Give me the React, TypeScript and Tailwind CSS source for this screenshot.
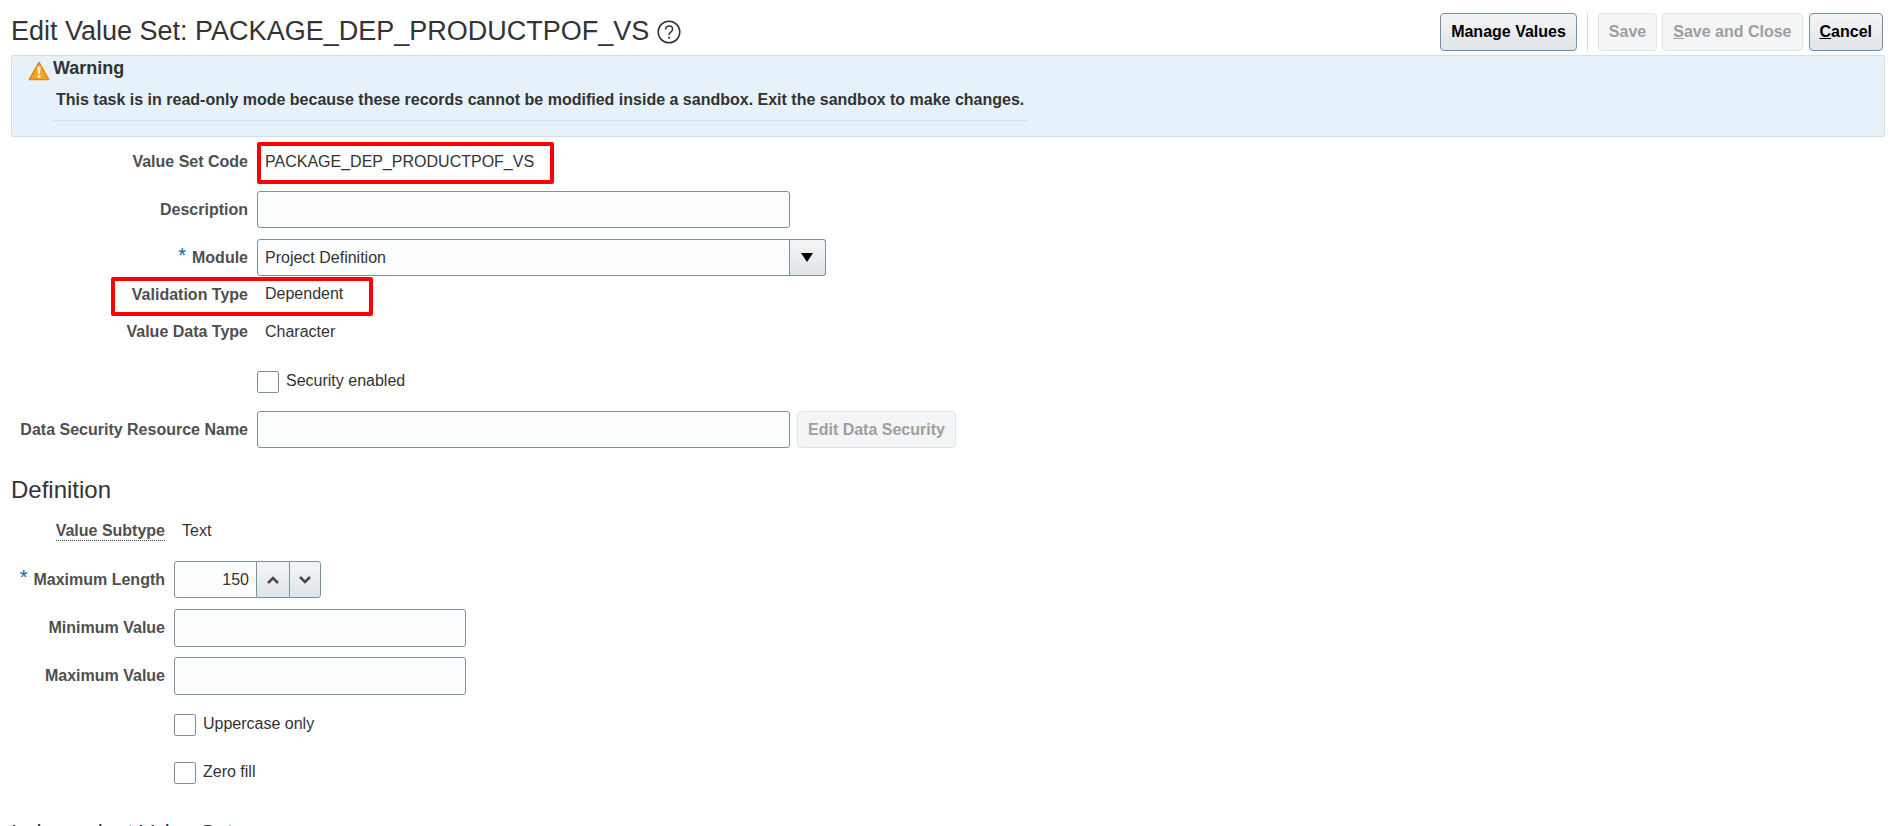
import { useState } from 'react'
import type { ReactNode } from 'react'
import clsx from 'clsx'

const inputClass = 'h-full rounded-[3px] border border-[#7c919e] bg-[#fcfdff] px-[7px] text-[#333333] focus:outline-none focus:border-[#0572ce]'

const Button = ({ children, disabled = false }: { children: ReactNode; disabled?: boolean }) => (
    <button
        type="button"
        disabled={disabled}
        className={clsx(
            'h-full whitespace-nowrap rounded-[4px] border px-[10px] font-bold',
            disabled
                ? 'border-[#dfe4e9] bg-[#f4f5f7] text-[#9e9e9e]'
                : 'border-[#7590a5] bg-linear-to-b from-[#f3f4f5] to-[#e1e5e8] text-black'
        )}
    >
        {children}
    </button>
)

const Highlight = ({ className }: { className: string }) => (
    <span className={clsx('pointer-events-none absolute rounded-[2px] border-4 border-[#ff0000]', className)} />
)

const Required = () => <span className="mr-[6px] self-start pt-1 text-[20px] leading-[24px] font-normal text-[#0f5fb0]">*</span>

interface RowProps {
    label?: string
    htmlFor?: string
    required?: boolean
    hint?: boolean
    narrow?: boolean
    className?: string
    children: ReactNode
}

const Row = ({ label, htmlFor, required, hint, narrow, className, children }: RowProps) => (
    <div className={clsx('relative flex items-center', className)}>
        <div className={clsx('mr-[9px] flex h-full shrink-0 items-center justify-end font-bold text-[#4f4f4f]', narrow ? 'w-[154px]' : 'w-[237px]')}>
            {required && <Required />}
            {label && (
                <label htmlFor={htmlFor} className={clsx(hint && 'border-b border-dotted border-[#4f4f4f] leading-[18px]')}>
                    {label}
                </label>
            )}
        </div>
        {children}
    </div>
)

const Checkbox = ({ id, label }: { id: string; label: string }) => (
    <div className="flex items-center">
        <input
            id={id}
            type="checkbox"
            className="h-[22px] w-[22px] appearance-none rounded-[2px] border border-[#7c919e] bg-white checked:bg-[#0572ce]"
        />
        <label htmlFor={id} className="ml-[7px] pb-0.5">{label}</label>
    </div>
)

const HelpIcon = () => (
    <svg width="24" height="24" viewBox="0 0 24 24" fill="none" stroke="#333333" strokeWidth="1.5">
        <circle cx="12" cy="12" r="10.8" />
        <path d="M8.6 9.6C8.6 7.4 10 6 12.1 6s3.5 1.3 3.5 3.1c0 1.5-.8 2.3-1.9 3.1-1.1.8-1.6 1.4-1.6 2.8" />
        <path d="M12.1 16.8v1.9" strokeWidth="1.8" />
    </svg>
)

const WarningIcon = () => (
    <svg width="22" height="20" viewBox="0 0 22 20">
        <path d="M11 1.3 20.8 18.6H1.2Z" fill="#faa21f" stroke="#dd8a15" strokeWidth="1.4" strokeLinejoin="round" />
        <path d="M9.5 5.6h3l-.5 7.2h-2Z" fill="#ffffff" />
        <circle cx="11" cy="15.4" r="1.6" fill="#ffffff" />
    </svg>
)

const App = () => {
    const [maxLength, setMaxLength] = useState(150)

    return (
        <div className="h-screen overflow-hidden bg-white pr-[6px] pl-[11px] font-['Liberation_Sans',Arial,sans-serif] text-[16px] leading-[20px] text-[#333333]">
            <header className="flex h-[55px] items-start justify-between">
                <div className="flex items-center pt-[14px]">
                    <h1 className="text-[27px] leading-[34px] whitespace-nowrap">Edit Value Set: PACKAGE_DEP_PRODUCTPOF_VS</h1>
                    <button type="button" aria-label="Help" className="ml-[8px] pt-0.5">
                        <HelpIcon />
                    </button>
                </div>
                <div className="mt-[13px] flex h-[38px] pr-[2px]">
                    <Button>Manage Values</Button>
                    <span className="mx-[10px] w-px bg-[#d0dbe3]" />
                    <Button disabled>Save</Button>
                    <span className="w-[5px]" />
                    <Button disabled><u>S</u>ave and Close</Button>
                    <span className="w-[6px]" />
                    <Button><u>C</u>ancel</Button>
                </div>
            </header>

            <section className="flex h-[82px] items-start rounded-[2px] border border-[#d3dee6] bg-[#e7f1fa] pl-4">
                <div className="pt-[5px]">
                    <WarningIcon />
                </div>
                <div className="ml-[3px]">
                    <h2 className="pt-[2px] text-[18px] leading-[20px] font-bold">Warning</h2>
                    <p className="mt-[12px] border-b border-[#d3dee6] pr-1 pb-[10px] pl-[3px] font-bold">
                        This task is in read-only mode because these records cannot be modified inside a sandbox. Exit the sandbox to make changes.
                    </p>
                </div>
            </section>

            <form onSubmit={(e) => e.preventDefault()}>
                <Row label="Value Set Code" className="mt-[6px] h-[37px]">
                    <span className="pl-2">PACKAGE_DEP_PRODUCTPOF_VS</span>
                    <Highlight className="-top-px left-[246px] h-[42px] w-[297px]" />
                </Row>
                <Row label="Description" htmlFor="description" className="mt-[11px] h-[37px]">
                    <input id="description" type="text" className={clsx(inputClass, 'w-[533px]')} />
                </Row>
                <Row label="Module" htmlFor="module" required className="mt-[11px] h-[37px]">
                    <div className="relative h-full">
                        <select id="module" className={clsx(inputClass, 'w-[569px] appearance-none')}>
                            <option>Project Definition</option>
                        </select>
                        <span className="pointer-events-none absolute top-0 right-0 flex h-full w-[37px] items-center justify-center rounded-r-[3px] border border-[#7c919e] bg-linear-to-b from-[#f3f4f5] to-[#e1e5e8] pr-0.5">
                            <svg width="12" height="9" viewBox="0 0 12 9">
                                <path d="M0 0h12L6 9Z" fill="#000000" />
                            </svg>
                        </span>
                    </div>
                </Row>
                <Row label="Validation Type" className="h-[37px]">
                    <span className="pb-0.5 pl-2">Dependent</span>
                    <Highlight className="top-px left-[100px] h-[39px] w-[262px]" />
                </Row>
                <Row label="Value Data Type" className="h-[37px]">
                    <span className="pl-2">Character</span>
                </Row>
                <Row className="mt-[13px] h-[37px]">
                    <Checkbox id="security" label="Security enabled" />
                </Row>
                <Row label="Data Security Resource Name" htmlFor="resource" className="mt-[11px] h-[37px]">
                    <input id="resource" type="text" className={clsx(inputClass, 'mr-[7px] w-[533px]')} />
                    <Button disabled>Edit Data Security</Button>
                </Row>

                <h2 className="mt-[28px] text-[24px] leading-[28px]">Definition</h2>
                <Row label="Value Subtype" hint narrow className="mt-2 h-[38px]">
                    <span className="pl-2">Text</span>
                </Row>
                <Row label="Maximum Length" htmlFor="max-length" required narrow className="mt-[11px] h-[37px]">
                    <input
                        id="max-length"
                        type="text"
                        value={maxLength}
                        onChange={(e) => setMaxLength(Number(e.target.value) || 0)}
                        className={clsx(inputClass, 'w-[83px] rounded-r-none text-right')}
                    />
                    <button
                        type="button"
                        aria-label="Increment"
                        onClick={() => setMaxLength(prev => prev + 1)}
                        className="flex h-full w-8 items-center justify-center border-y border-[#7c919e] bg-linear-to-b from-[#f3f4f5] to-[#e1e5e8]"
                    >
                        <svg width="12" height="8" viewBox="0 0 12 8" fill="none" stroke="#4a4a4a" strokeWidth="2.6">
                            <path d="M1 7l5-5 5 5" />
                        </svg>
                    </button>
                    <button
                        type="button"
                        aria-label="Decrement"
                        onClick={() => setMaxLength(prev => prev - 1)}
                        className="flex h-full w-8 items-center justify-center rounded-r-[3px] border border-[#7c919e] bg-linear-to-b from-[#f3f4f5] to-[#e1e5e8]"
                    >
                        <svg width="12" height="8" viewBox="0 0 12 8" fill="none" stroke="#4a4a4a" strokeWidth="2.6">
                            <path d="M1 1l5 5 5-5" />
                        </svg>
                    </button>
                </Row>
                <Row label="Minimum Value" htmlFor="min-value" narrow className="mt-[11px] h-[38px]">
                    <input id="min-value" type="text" className={clsx(inputClass, 'w-[292px]')} />
                </Row>
                <Row label="Maximum Value" htmlFor="max-value" narrow className="mt-[10px] h-[38px]">
                    <input id="max-value" type="text" className={clsx(inputClass, 'w-[292px]')} />
                </Row>
                <Row narrow className="mt-[11px] h-[38px]">
                    <Checkbox id="uppercase" label="Uppercase only" />
                </Row>
                <Row narrow className="mt-[10px] h-[38px]">
                    <Checkbox id="zero-fill" label="Zero fill" />
                </Row>

                <h2 className="mt-[27px] text-[22px] leading-[28px]">Independent Value Set</h2>
            </form>
        </div>
    )
}

export default App
